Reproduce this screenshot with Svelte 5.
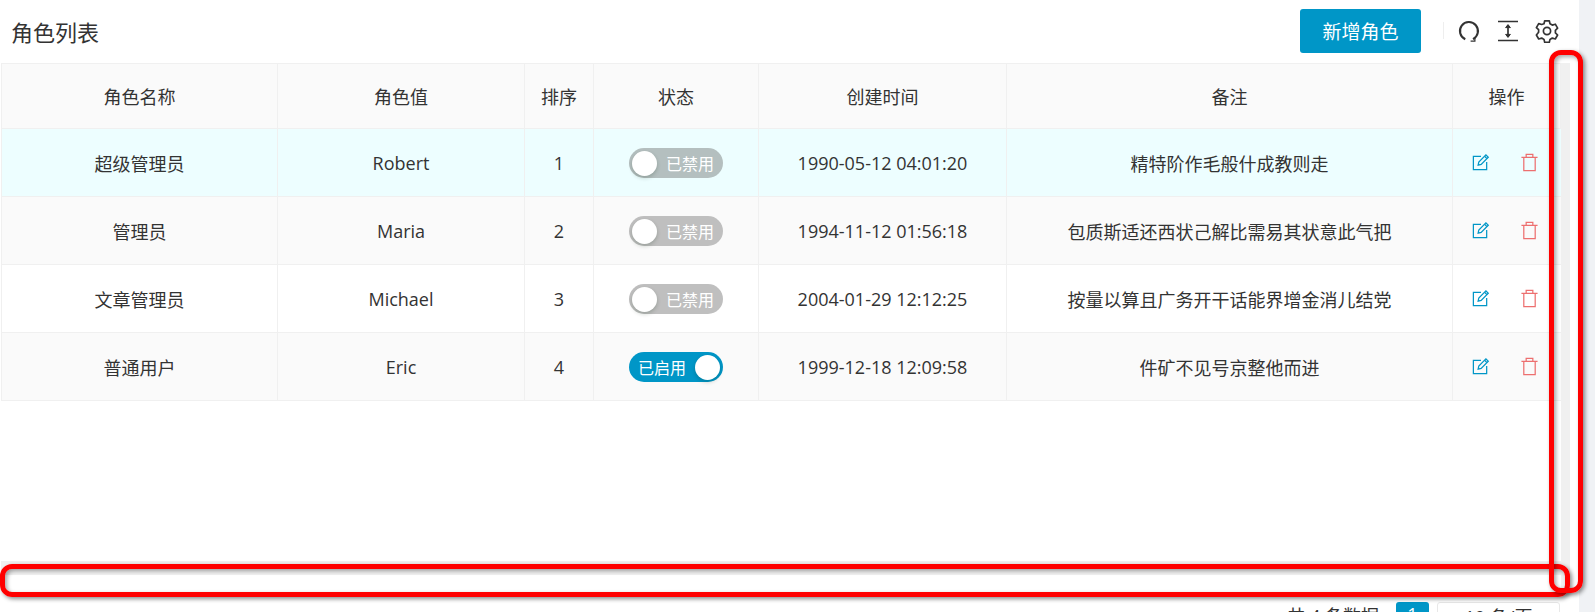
<script>
  const rows = [
    { name: '超级管理员', value: 'Robert', order: 1, on: false, time: '1990-05-12 04:01:20', note: '精特阶作毛般什成教则走', active: true },
    { name: '管理员', value: 'Maria', order: 2, on: false, time: '1994-11-12 01:56:18', note: '包质斯适还西状己解比需易其状意此气把' },
    { name: '文章管理员', value: 'Michael', order: 3, on: false, time: '2004-01-29 12:12:25', note: '按量以算且广务开干话能界增金消儿结党' },
    { name: '普通用户', value: 'Eric', order: 4, on: true, time: '1999-12-18 12:09:58', note: '件矿不见号京整他而进' }
  ];
</script>

<div class="page">
  <main class="panel">
    <header class="toolbar">
      <h1>角色列表</h1>
      <div class="actions">
        <button class="primary">新增角色</button>
        <span class="divider"></span>
        <svg class="tool" viewBox="0 0 24 24" fill="none" stroke="#333" stroke-width="2.1"><path d="M8.3 20.3A9 9 0 1 1 16 20.1" /><path d="M13.6 22.2h4.3v-4" stroke-width="1.2" /></svg>
        <svg class="tool" viewBox="0 0 24 24" fill="none" stroke="#333" stroke-width="1.7"><path d="M2 2.5h20M2 21.5h20" /><path d="M12 6v12" /><path d="M9.6 8.6 12 5.6l2.4 3ZM9.6 15.4 12 18.4l2.4-3Z" fill="#333" stroke-width="1" /></svg>
        <svg class="tool" viewBox="0 0 24 24" fill="none" stroke="#333" stroke-width="1.7" stroke-linejoin="round"><circle cx="12" cy="12" r="3.6" /><path d="M9.7 1.8h4.6l.7 3 2.3 1.3 3-.9 2.3 4-2.2 2.1v2.6l2.2 2.1-2.3 4-3-.9-2.3 1.3-.7 3H9.7l-.7-3-2.3-1.3-3 .9-2.3-4L3.6 13.300v-2.600L1.400 8.600l2.300-4 3 .9L9 4.800z" /></svg>
      </div>
    </header>

    <div class="table-wrap">
      <div class="table">
        <div class="row head">
          <div class="cell">角色名称</div>
          <div class="cell">角色值</div>
          <div class="cell">排序</div>
          <div class="cell">状态</div>
          <div class="cell">创建时间</div>
          <div class="cell">备注</div>
          <div class="cell">操作</div>
        </div>
        {#each rows as r, i}
          <div class="row" class:striped={i % 2 === 1} class:active={r.active}>
            <div class="cell">{r.name}</div>
            <div class="cell">{r.value}</div>
            <div class="cell">{r.order}</div>
            <div class="cell">
              <span class="switch" class:on={r.on}>
                <span class="knob"></span>
                <span class="label">{r.on ? '已启用' : '已禁用'}</span>
              </span>
            </div>
            <div class="cell">{r.time}</div>
            <div class="cell">{r.note}</div>
            <div class="cell ops">
              <svg class="op" viewBox="0 0 20 20" fill="none" stroke="#0096c7" stroke-width="1.300"><path d="M10.500 3.500H2.500v14h14V9.500" /><path d="M7.500 12.800l.7-3.300L15.700 2l2.500 2.500-7.500 7.500z" /><path d="M14.300 3.400l2.500 2.500" /></svg>
              <svg class="op del" viewBox="0 0 20 20" fill="none" stroke="#ed6f6f" stroke-width="1.300"><path d="M1.500 4.500h17M6.500 4.500V1.500h7v3M4 4.500v14h12v-14" /></svg>
            </div>
          </div>
        {/each}
      </div>
      <div class="vbar"></div>
      <div class="hbar"></div>
    </div>

    <footer class="pager">
      <span class="total">共 4 条数据</span>
      <span class="current">1</span>
      <span class="size">10 条/页</span>
    </footer>
  </main>

  <div class="mark mark-h"></div>
  <div class="mark mark-v"></div>
</div>

<style>
  :global(body) {
    margin: 0;
    background: #f0f2f5;
  }
  .page {
    position: relative;
    width: 1595px;
    height: 612px;
    overflow: hidden;
    font-family: "Open Sans", "Noto Sans CJK SC", sans-serif;
    font-size: 18px;
    color: #333;
  }
  .panel {
    width: 1579px;
    height: 612px;
    background: #fff;
    display: flex;
    flex-direction: column;
    overflow: hidden;
  }
  .toolbar {
    height: 63px;
    flex: none;
    display: flex;
    align-items: center;
    justify-content: space-between;
    padding: 0 20px 0 11px;
    box-sizing: border-box;
  }
  h1 {
    margin: 0;
    font-size: 22px;
    font-weight: 400;
    line-height: 1;
  }
  .actions {
    display: flex;
    align-items: center;
  }
  .primary {
    width: 121px;
    height: 44px;
    margin-top: -2px;
    border: 0;
    border-radius: 3px;
    background: #0096c7;
    color: #fff;
    font: inherit;
    font-size: 19px;
  }
  .divider {
    width: 1px;
    height: 17px;
    margin: -2px 13px 0 22px;
    background: #eee;
  }
  .tool {
    width: 24px;
    height: 24px;
    margin-right: 15px;
    margin-top: -1px;
  }
  .tool:last-child {
    margin-right: 0;
  }
  .table-wrap {
    position: relative;
    height: 529px;
    flex: none;
    padding-left: 1px;
  }
  .table {
    width: 1560px;
    border-top: 1px solid #f0f0f0;
  }
  .row {
    display: grid;
    grid-template-columns: 276px 247px 69px 165px 248px 446px 108px;
    height: 68px;
    box-sizing: border-box;
    border-bottom: 1px solid #f0f0f0;
    border-left: 1px solid #f0f0f0;
  }
  .row.head {
    height: 65px;
    background: #fafafa;
    grid-template-columns: 276px 247px 69px 165px 248px 446px 108px;
  }
  .striped {
    background: #fafafa;
  }
  .active {
    background: #edfeff;
  }
  .cell {
    display: flex;
    align-items: center;
    justify-content: center;
    border-right: 1px solid #f0f0f0;
    white-space: nowrap;
  }
  .switch {
    position: relative;
    display: flex;
    align-items: center;
    justify-content: flex-end;
    box-sizing: border-box;
    width: 94px;
    height: 30px;
    padding: 0 9px;
    border-radius: 15px;
    background: #bfbfbf;
    color: #fff;
    font-size: 16px;
  }
  .active .switch {
    background: #b4bfbf;
  }
  .switch.on {
    background: #0096c7;
    justify-content: flex-start;
  }
  .knob {
    position: absolute;
    left: 3px;
    top: 3px;
    width: 25px;
    height: 25px;
    border-radius: 50%;
    background: #fff;
    box-shadow: 0 2px 4px rgba(0, 35, 11, 0.2);
  }
  .on .knob {
    left: auto;
    right: 3px;
  }
  .ops {
    justify-content: flex-start;
    gap: 30px;
    padding-left: 18px;
    border-right: 0;
  }
  .op {
    width: 19px;
    height: 19px;
  }
  .vbar {
    position: absolute;
    left: 1561px;
    top: 0;
    width: 9px;
    height: 529px;
    background: #f0f0f0;
  }
  .hbar {
    position: absolute;
    left: 1px;
    bottom: 17px;
    width: 1569px;
    height: 14px;
    background: #f0f0f0;
  }
  .pager {
    display: flex;
    align-items: flex-start;
    flex: none;
    height: 20px;
    padding-top: 10px;
    justify-content: flex-end;
    padding-right: 19px;
  }
  .total {
    margin-right: 17px;
  }
  .current {
    box-sizing: border-box;
    width: 33px;
    height: 33px;
    margin-right: 8px;
    border-radius: 3px;
    background: #0096c7;
    color: #fff;
    text-align: center;
  }
  .size {
    box-sizing: border-box;
    width: 123px;
    height: 33px;
    border: 1px solid #e8e8e8;
    border-radius: 3px;
    text-align: center;
  }
  .mark {
    position: absolute;
    box-sizing: border-box;
    border: 5px solid #f00;
    border-radius: 12px;
    box-shadow: 2px 2px 4px rgba(0, 0, 0, 0.45), inset 2px 2px 4px rgba(0, 0, 0, 0.35);
  }
  .mark-h {
    left: 0;
    top: 564px;
    width: 1570px;
    height: 33px;
  }
  .mark-v {
    left: 1549px;
    top: 50px;
    width: 34px;
    height: 543px;
  }
</style>
